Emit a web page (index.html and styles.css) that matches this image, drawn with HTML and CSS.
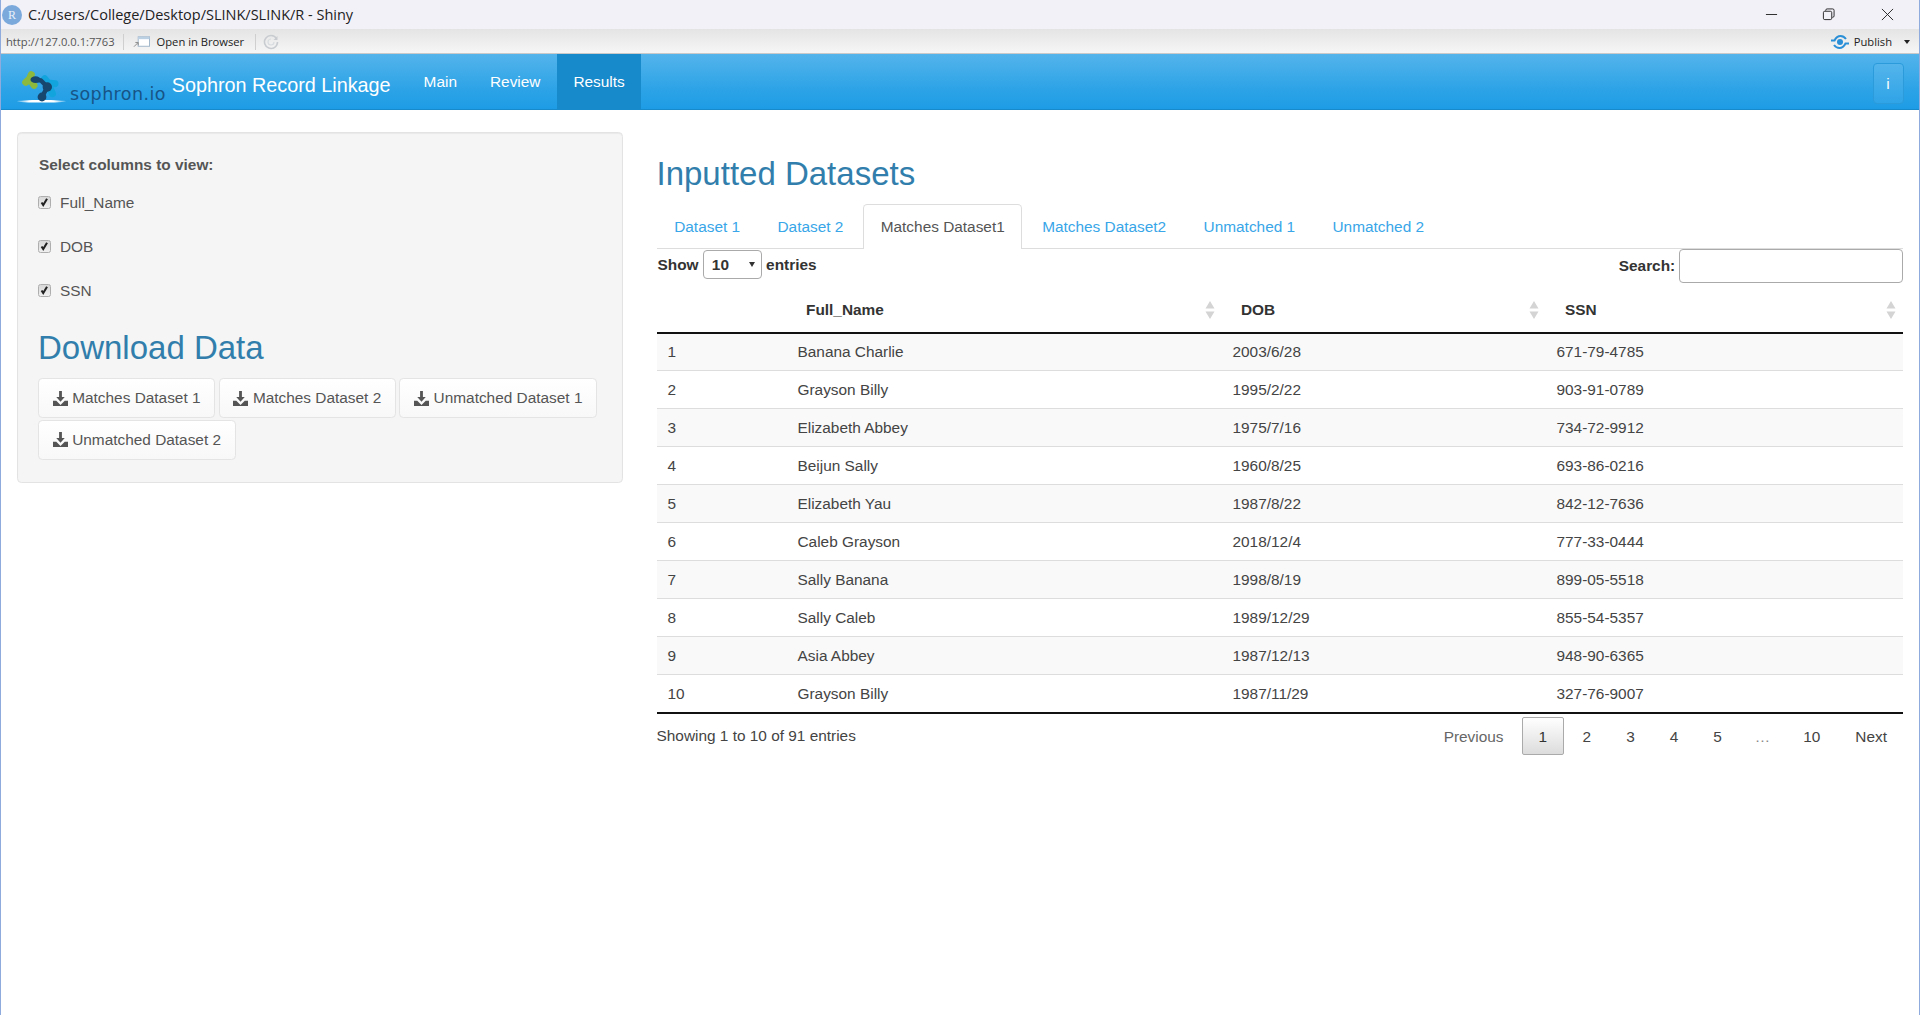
FILE: index.html
```html
<!DOCTYPE html>
<html lang="en">
<head>
<meta charset="utf-8">
<title>Sophron Record Linkage</title>
<link rel="stylesheet" href="styles.css">
</head>
<body>
<div class="window">
  <header class="titlebar">
    <div class="r-badge">R</div>
    <div class="title-text">C:/Users/College/Desktop/SLINK/SLINK/R - Shiny</div>
    <div class="win-controls">
      <svg class="win-icon" viewBox="0 0 14 14"><path d="M1 7h12" stroke="#222" stroke-width="1" fill="none"/></svg>
      <svg class="win-icon" viewBox="0 0 14 14"><rect x="1.5" y="3.5" width="9" height="9" rx="1.5" fill="none" stroke="#222"/><path d="M4 3V2.5A1.5 1.5 0 0 1 5.5 1h6A1.5 1.5 0 0 1 13 2.5v6a1.5 1.5 0 0 1-1.5 1.5H11" fill="none" stroke="#222"/></svg>
      <svg class="win-icon" viewBox="0 0 14 14"><path d="M1 1l12 12M13 1L1 13" stroke="#222" stroke-width="1" fill="none"/></svg>
    </div>
  </header>
  <div class="toolbar">
    <span class="url">http://127.0.0.1:7763</span>
    <span class="tool-sep"></span>
    <svg class="open-icon" viewBox="0 0 18 14"><rect x="5.5" y="1.5" width="12" height="10" fill="#fff" stroke="#9fb4c8"/><rect x="5.5" y="1.5" width="12" height="2.5" fill="#bcd0e4"/><path d="M1 12l4-4M2.5 7.5H5.5V10.5" stroke="#8a8a8a" fill="none"/></svg>
    <span class="open-text">Open in Browser</span>
    <span class="tool-sep tool-sep-b"></span>
    <svg class="refresh-icon" viewBox="0 0 16 16"><path d="M13.5 4.5A6.5 6.5 0 1 0 14.5 8" fill="none" stroke="#c8ccd0" stroke-width="1.6"/><path d="M14.5 2v4h-4z" fill="#c8ccd0"/><path d="M8 5a3 3 0 1 0 3 3" fill="none" stroke="#d8dcdf" stroke-width="1.2"/></svg>
    <div class="publish">
      <svg class="publish-icon" viewBox="0 0 18 14"><path d="M0 5.5h3.5C5 2.5 7 1 9.5 1c2.5 0 4 1 5.5 3" fill="none" stroke="#2a8fd6" stroke-width="2"/><path d="M18 8.5h-3.5C13 11.5 11 13 8.5 13c-2.5 0-4-1-5.5-3" fill="none" stroke="#2a8fd6" stroke-width="2"/><circle cx="9" cy="7" r="3" fill="#2a8fd6"/></svg>
      <span>Publish</span>
      <span class="publish-caret"></span>
    </div>
  </div>
  <nav class="navbar">
    <div class="brand-logo">
      <svg class="logo-mark" viewBox="0 0 50 38">
        <defs>
          <linearGradient id="swoosh"><stop offset="0" stop-color="#fff" stop-opacity="0.2"/><stop offset="0.25" stop-color="#fff"/><stop offset="0.75" stop-color="#fff"/><stop offset="1" stop-color="#fff" stop-opacity="0.2"/></linearGradient>
        </defs>
        <ellipse cx="24.5" cy="36.3" rx="24.5" ry="1.3" fill="url(#swoosh)"/>
        <path d="M14.3 9.7L12.5 14 8.7 17.3M12.5 14L17 20.3" fill="none" stroke="#8db93e" stroke-width="7" stroke-linecap="round" stroke-linejoin="round"/>
        <path d="M27.7 13.7L31 18 38 18.7M31 18L35.5 28.7" fill="none" stroke="#12a5dd" stroke-width="7" stroke-linecap="round" stroke-linejoin="round"/>
        <path d="M18.7 14.7L24 15.5 30.3 22 25 32" fill="none" stroke="#17466f" stroke-width="4.5" stroke-linecap="round" stroke-linejoin="round"/>
        <ellipse cx="18.5" cy="14.7" rx="5" ry="3.4" fill="#17466f"/>
        <circle cx="30.3" cy="22" r="4.7" fill="#17466f"/>
        <circle cx="25" cy="32" r="4.4" fill="#17466f"/>
      </svg>
      <span class="logo-text">sophron.io</span>
    </div>
    <span class="brand-title">Sophron Record Linkage</span>
    <a class="nav-link">Main</a>
    <a class="nav-link">Review</a>
    <a class="nav-link nav-active">Results</a>
    <button class="info-btn" type="button">i</button>
  </nav>
  <main class="content">
    <aside class="side-col">
      <section class="well">
        <div class="field-label">Select columns to view:</div>
        <label class="check-row"><input type="checkbox" checked>Full_Name</label>
        <label class="check-row"><input type="checkbox" checked>DOB</label>
        <label class="check-row"><input type="checkbox" checked>SSN</label>
        <h1 class="heading heading-side">Download Data</h1>
        <div class="btn-group">
          <a class="btn"><svg class="dl-icon" viewBox="0 0 16 16"><path d="M6.5 0h3v6.5h3L8 11.5 3.5 6.5h3zM0 10.5h3.5L8 15l4.5-4.5H16V16H0z" fill="#555"/></svg>Matches Dataset 1</a>
          <a class="btn"><svg class="dl-icon" viewBox="0 0 16 16"><path d="M6.5 0h3v6.5h3L8 11.5 3.5 6.5h3zM0 10.5h3.5L8 15l4.5-4.5H16V16H0z" fill="#555"/></svg>Matches Dataset 2</a>
          <a class="btn"><svg class="dl-icon" viewBox="0 0 16 16"><path d="M6.5 0h3v6.5h3L8 11.5 3.5 6.5h3zM0 10.5h3.5L8 15l4.5-4.5H16V16H0z" fill="#555"/></svg>Unmatched Dataset 1</a>
          <a class="btn"><svg class="dl-icon" viewBox="0 0 16 16"><path d="M6.5 0h3v6.5h3L8 11.5 3.5 6.5h3zM0 10.5h3.5L8 15l4.5-4.5H16V16H0z" fill="#555"/></svg>Unmatched Dataset 2</a>
        </div>
      </section>
    </aside>
    <section class="main-col">
      <h1 class="heading heading-main">Inputted Datasets</h1>
      <ul class="tabs">
        <li class="tab">Dataset 1</li>
        <li class="tab">Dataset 2</li>
        <li class="tab tab-active">Matches Dataset1</li>
        <li class="tab">Matches Dataset2</li>
        <li class="tab">Unmatched 1</li>
        <li class="tab">Unmatched 2</li>
      </ul>
      <div class="dt-controls">
        <div class="dt-length">Show <span class="fake-select">10<span class="select-caret"></span></span> entries</div>
        <label class="dt-search">Search: <input class="search-input" type="text"></label>
      </div>
      <table class="dt">
        <colgroup><col class="c-idx"><col class="c-name"><col class="c-dob"><col class="c-ssn"></colgroup>
        <thead>
          <tr>
            <th></th>
            <th><div class="th-in">Full_Name<svg class="sort" viewBox="0 0 10 18"><path d="M5 0l4.5 7.5h-9zM5 18L.5 10.5h9z" fill="#d4d4d4"/></svg></div></th>
            <th><div class="th-in">DOB<svg class="sort" viewBox="0 0 10 18"><path d="M5 0l4.5 7.5h-9zM5 18L.5 10.5h9z" fill="#d4d4d4"/></svg></div></th>
            <th><div class="th-in">SSN<svg class="sort" viewBox="0 0 10 18"><path d="M5 0l4.5 7.5h-9zM5 18L.5 10.5h9z" fill="#d4d4d4"/></svg></div></th>
          </tr>
        </thead>
        <tbody>
          <tr><td>1</td><td>Banana Charlie</td><td>2003/6/28</td><td>671-79-4785</td></tr>
          <tr><td>2</td><td>Grayson Billy</td><td>1995/2/22</td><td>903-91-0789</td></tr>
          <tr><td>3</td><td>Elizabeth Abbey</td><td>1975/7/16</td><td>734-72-9912</td></tr>
          <tr><td>4</td><td>Beijun Sally</td><td>1960/8/25</td><td>693-86-0216</td></tr>
          <tr><td>5</td><td>Elizabeth Yau</td><td>1987/8/22</td><td>842-12-7636</td></tr>
          <tr><td>6</td><td>Caleb Grayson</td><td>2018/12/4</td><td>777-33-0444</td></tr>
          <tr><td>7</td><td>Sally Banana</td><td>1998/8/19</td><td>899-05-5518</td></tr>
          <tr><td>8</td><td>Sally Caleb</td><td>1989/12/29</td><td>855-54-5357</td></tr>
          <tr><td>9</td><td>Asia Abbey</td><td>1987/12/13</td><td>948-90-6365</td></tr>
          <tr><td>10</td><td>Grayson Billy</td><td>1987/11/29</td><td>327-76-9007</td></tr>
        </tbody>
      </table>
      <div class="dt-footer">
        <div class="dt-info">Showing 1 to 10 of 91 entries</div>
        <div class="pager">
          <a class="page page-muted">Previous</a>
          <a class="page page-current">1</a>
          <a class="page">2</a>
          <a class="page">3</a>
          <a class="page">4</a>
          <a class="page">5</a>
          <span class="page page-ellipsis">…</span>
          <a class="page">10</a>
          <a class="page">Next</a>
        </div>
      </div>
    </section>
  </main>
</div>
</body>
</html>
```

FILE: styles.css
```css
* { box-sizing: border-box; }
html, body { margin: 0; height: 100%; }
body {
  font-family: "Liberation Sans", Arial, sans-serif;
  font-size: 15.4px;
  line-height: 1.42857;
  color: #555;
  background: #fff;
}
.window {
  height: 1015px;
  overflow: hidden;
  display: flex;
  flex-direction: column;
  border-left: 1px solid #8fabdd;
  border-right: 1px solid #8fabdd;
}
.titlebar {
  height: 29px;
  flex: none;
  display: flex;
  align-items: center;
  background: #f3f1f8;
  font-family: "Open Sans", "Noto Sans", sans-serif;
  font-size: 14.5px;
  color: #222;
}
.r-badge {
  width: 20px;
  height: 20px;
  margin-left: 1px;
  border-radius: 50%;
  background: #7ba9dc;
  color: #e9f0fa;
  font: 12px/20px "Liberation Serif", serif;
  text-align: center;
}
.title-text { margin-left: 6px; padding-top: 1px; }
.win-controls {
  margin-left: auto;
  display: flex;
  gap: 44px;
  margin-right: 25px;
  align-items: center;
}
.win-icon { width: 13px; height: 13px; display: block; }
.win-icon:nth-child(2) { margin-right: 2px; }
.toolbar {
  height: 25px;
  padding-top: 1px;
  flex: none;
  display: flex;
  align-items: center;
  background: linear-gradient(#e4e4e4, #f6f6f6);
  border-bottom: 1px solid #c9c9c9;
  font-family: "Open Sans", "Noto Sans", sans-serif;
  font-size: 11.2px;
  color: #222;
}
.url { margin-left: 5px; color: #555; }
.tool-sep { width: 1px; height: 16px; background: #cfcfcf; margin-left: 8px; }
.open-icon { width: 17px; height: 14px; margin-left: 9px; }
.open-text { margin-left: 7px; }
.tool-sep-b { margin-left: 11px; }
.refresh-icon { width: 16px; height: 16px; margin-left: 7px; }
.publish { margin-left: auto; display: flex; align-items: center; margin-right: 9px; }
.publish-icon { width: 18px; height: 14px; margin-right: 5px; }
.publish-caret {
  width: 0;
  height: 0;
  margin-left: 12px;
  border-left: 3.5px solid transparent;
  border-right: 3.5px solid transparent;
  border-top: 4px solid #222;
}
.navbar {
  height: 56px;
  flex: none;
  display: flex;
  align-items: stretch;
  background: linear-gradient(#54b4eb, #2fa4e7 60%, #1d9ce5);
  border-bottom: 1px solid #178acc;
  color: #fff;
}
.brand-logo { display: flex; align-items: flex-end; padding-left: 16px; }
.logo-mark { width: 50px; height: 38px; display: block; margin-bottom: 6px; }
.logo-text {
  margin-left: 3px;
  margin-bottom: 5px;
  font-family: "DejaVu Sans", sans-serif;
  font-size: 17.5px;
  line-height: 20px;
  letter-spacing: 0.4px;
  color: #175486;
}
.brand-title {
  margin-left: 6px;
  margin-top: 7px;
  align-self: center;
  font-size: 19.8px;
  line-height: 27px;
}
.nav-link {
  padding: 1px 16.5px 0;
  display: flex;
  align-items: center;
  color: #fff;
  text-shadow: 0 1px 0 rgba(0,0,0,.05);
}
.nav-link:first-of-type { margin-left: 16.5px; }
.nav-active { background: #178acc; }
.info-btn {
  margin: 9px 15px 5px auto;
  width: 31px;
  border: 1px solid #2b9bdc;
  border-radius: 4px;
  background: linear-gradient(#54b4eb, #2fa4e7);
  color: #fff;
  font: 15.4px "Liberation Sans", sans-serif;
  padding: 0 1px 0 0;
}
.content {
  flex: 1;
  display: grid;
  grid-template-columns: 639px 1fr;
  min-height: 0;
}
.side-col { padding: 22px 17.5px 0 16px; }
.main-col { padding: 0 16.5px; }
.well {
  background: #f5f5f5;
  border: 1px solid #e3e3e3;
  border-radius: 4.4px;
  box-shadow: inset 0 1px 1px rgba(0,0,0,.05);
  padding: 21px;
  height: 351px;
}
.field-label { font-weight: bold; line-height: 22px; margin-bottom: 16px; }
.check-row {
  display: flex;
  align-items: center;
  height: 22px;
  margin-bottom: 22px;
  margin-left: -1px;
}
.check-row input {
  appearance: none;
  width: 13px;
  height: 13px;
  margin: -2px 9px 0 0;
  border: 1px solid #aeaeae;
  border-radius: 2.5px;
  background: url("data:image/svg+xml,%3Csvg xmlns='http://www.w3.org/2000/svg' viewBox='0 0 13 13'%3E%3Cpath d='M3 6.5l2 3L9.5 2' fill='none' stroke='%23222' stroke-width='2.4'/%3E%3C/svg%3E") center/contain no-repeat, linear-gradient(#d8d8d8, #efefef);
}
.heading { font-weight: 500; color: #317eac; margin: 0; line-height: 1.1; font-size: 33px; }
.heading-side { margin-top: 28px; margin-bottom: 12px; margin-left: -1px; }
.heading-main { margin-top: 46px; margin-bottom: 11.5px; }
.btn-group { display: flex; flex-wrap: wrap; gap: 1.5px 3.5px; margin-left: -1px; }
.btn {
  display: flex;
  align-items: center;
  height: 40px;
  padding: 0 13.7px;
  border: 1px solid #e4e4e4;
  border-radius: 4.4px;
  background: linear-gradient(#fff, #f8f8f8);
  color: #555;
  white-space: nowrap;
}
.dl-icon { width: 15px; height: 15px; margin-right: 4.5px; flex: none; }
.tabs {
  list-style: none;
  margin: 0;
  padding: 0;
  display: flex;
  gap: 2px;
  height: 45px;
  border-bottom: 1px solid #ddd;
}
.tab {
  height: 45px;
  padding: 11px 16.7px 0;
  color: #38a6e8;
  border: 1px solid transparent;
  border-bottom: 0;
}
.tab-active {
  color: #555;
  background: #fff;
  border-color: #ddd;
  border-radius: 4.4px 4.4px 0 0;
}
.dt-controls {
  display: flex;
  justify-content: space-between;
  align-items: flex-start;
  color: #333;
  font-weight: bold;
  height: 49px;
}
.dt-length { display: flex; align-items: center; height: 30px; margin-top: 1px; margin-left: 1px; white-space: pre; }
.fake-select {
  display: inline-flex;
  justify-content: space-between;
  align-items: center;
  width: 59px;
  height: 29px;
  padding: 0 6px 0 8px;
  border: 1px solid #aaa;
  border-radius: 4px;
  background: #fff;
}
.select-caret {
  width: 0;
  height: 0;
  border-left: 3px solid transparent;
  border-right: 3px solid transparent;
  border-top: 5px solid #333;
}
.dt-search { display: flex; align-items: center; white-space: pre; }
.search-input {
  width: 224px;
  height: 34px;
  border: 1px solid #aaa;
  border-radius: 4px;
  background: #fff;
  margin-left: -1px;
}
.dt {
  width: 100%;
  table-layout: fixed;
  border-collapse: collapse;
  border-bottom: 2px solid #111;
}
.c-idx { width: 130px; }
.c-name { width: 435px; }
.c-dob { width: 324px; }
.dt th {
  height: 35px;
  padding: 0 7px 9px 19.5px;
  text-align: left;
  color: #333;
  font-weight: bold;
  border-bottom: 2px solid #111;
}
.th-in { display: flex; justify-content: space-between; align-items: center; }
.sort { width: 10px; height: 18px; flex: none; }
.dt td { height: 38px; padding: 0 11px; border-top: 1px solid #ddd; color: #444; }
.dt tbody tr:first-child td { border-top: 0; }
.dt tbody tr:nth-child(odd) { background: #f9f9f9; }
.dt-footer { display: flex; justify-content: space-between; align-items: flex-start; }
.dt-info { padding-top: 11px; color: #444; }
.pager { display: flex; margin-top: 3px; margin-right: -2px; }
.page {
  height: 38px;
  padding: 8px 16.5px 0;
  color: #444;
  border: 1px solid transparent;
  border-radius: 2px;
}
.page-muted { color: #666; padding-right: 17px; }
.page-ellipsis { color: #888; padding: 8px 14.5px 0; }
.page-current {
  border-color: #aaa;
  background: linear-gradient(#fff, #dcdcdc);
  color: #333;
  padding-left: 16px;
  padding-right: 16px;
  margin-right: 1px;
}
```
